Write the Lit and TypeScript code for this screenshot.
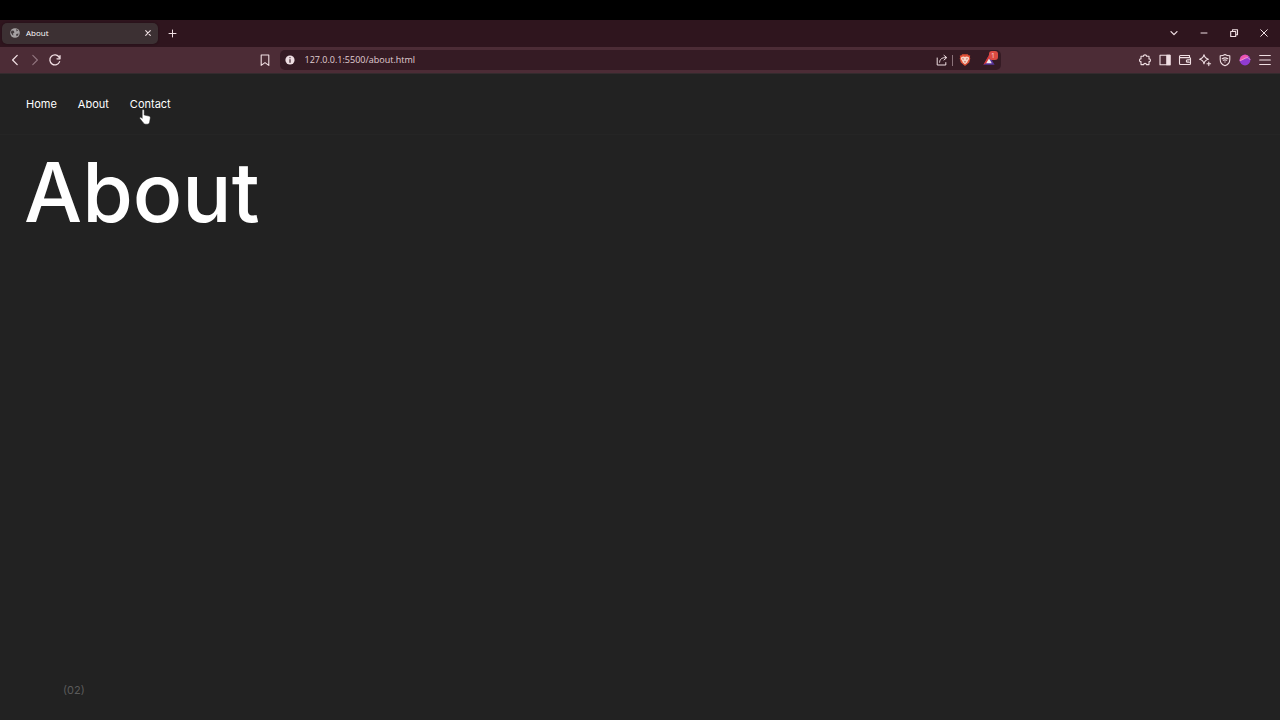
import { LitElement, html, css, svg } from "lit";
import { customElement } from "lit/decorators.js";

const icon = (body: unknown, size = 14) => html`<svg
  width=${size} height=${size} viewBox="0 0 14 14" fill="none" stroke="currentColor"
  stroke-width="1.1" stroke-linecap="round" stroke-linejoin="round" aria-hidden="true">${body}</svg>`;

const icons = {
  globe: svg`<circle cx="7" cy="7" r="4.8" fill="#a5a0a2" stroke="none"/><path d="m3.6 4.6 2.2.2.6 1.6L5 7.6l.4 2-1-.6-1.6-2.4zM8.2 3l2 1.2L8.6 5.6zM8.2 8l2.4-.4-.6 2-1.6.6z" fill="#443b3e" stroke="none"/>`,
  close: svg`<path d="m4.7 4.7 4.6 4.6m0-4.6L4.7 9.3"/>`,
  plus: svg`<path d="M7.5 4v7M4 7.5h7" stroke-width="1"/>`,
  chevron: svg`<path d="m4 5.6 3 3 3-3" stroke-width="1.3"/>`,
  minimise: svg`<path d="M4 7h6" stroke-width="1"/>`,
  restore: svg`<path d="M3.7 5.5h5v5h-5zM5.5 5.3V3.7h5v5H8.9"/>`,
  quit: svg`<path d="m3.7 3.7 6.6 6.6m0-6.6-6.6 6.6" stroke-width="1"/>`,
  back: svg`<path d="M9.2 2.4 4.6 7l4.6 4.6" stroke-width="1.3"/>`,
  forward: svg`<path d="M4.8 2.4 9.4 7l-4.6 4.6"/>`,
  reload: svg`<path d="M11.6 8.6A5 5 0 1 1 11.2 4.4M12 2.6v3.2H9" stroke-width="1.3"/>`,
  bookmark: svg`<path d="M3.2 2h7.6v10.4L7 9.6l-3.8 2.8z"/>`,
  info: svg`<circle cx="7" cy="7" r="4.6" fill="#eddde1" stroke="none"/><path d="M7 4.6v.1M7 6.7v2.6" stroke="#38202a" stroke-width="1.2"/>`,
  share: svg`<path d="M2.2 5v7h8.6V9.6M4.6 9.2c.2-3 2-4.6 6.2-4.6M9 2.4l2.8 2.2L9 7" stroke-width="1"/>`,
  lion: svg`<path d="M4.2 1.2h5.6l1 1.2 1.4.2-.3 1.8.4 1-1.1 4.2L7 13 2.8 9.6 1.7 5.4l.4-1L1.8 2.6l1.4-.2z" fill="#df5036" stroke="none"/><path d="m3.4 4 2.2-.6L7 4l1.4-.6 2.2.6.6 1.8-1.4 2.2L9.2 9.4 7 11.2 4.8 9.4 4.2 8 2.8 5.8z" fill="#f6d4c8" stroke="none"/><path d="m4.6 5.8 1 .2m3.8-.2-1 .2M6.4 8.8h1.2" stroke="#b65346" stroke-width=".8"/>`,
  rewards: svg`<path d="M7 2 1.4 11.8h11.2z" fill="#57349a" stroke="none"/><path d="M7 2 1.4 11.8 7 8.6z" fill="#d9372e" stroke="none"/><path d="m7 5.5-2.8 4.8h5.6z" fill="#f6e8ef" stroke="none"/>`,
  puzzle: svg`<path d="M3 3.2h2.5C5 1.4 9 1.4 8.5 3.2H11v2.7c1.9-.5 1.9 3.2 0 2.7v3H8.4c.3-1.6-3-1.6-2.7 0H3v-3c-2 .5-2-3.2 0-2.7z"/>`,
  sidebar: svg`<path d="M2 2.2h10v9.6H2z"/><path d="M8.8 2.2H12v9.6H8.8z" fill="currentColor"/>`,
  wallet: svg`<path d="M11.5 4.7V2.5h-9a1 1 0 0 0-1 1v7a1 1 0 0 0 1 1h9a1 1 0 0 0 1-1V5.6a1 1 0 0 0-1-1H2M12.4 6.7H9.6a1.3 1.3 0 0 0 0 2.6h2.8M10 8h.1"/>`,
  sparkle: svg`<path d="M6 1.7c.6 3 1.4 3.9 4.4 4.6C7.4 7 6.6 7.8 6 10.8 5.4 7.8 4.5 7 1.6 6.3c2.9-.7 3.8-1.6 4.4-4.6zM10.8 9v3.6M9 10.8h3.6"/>`,
  shield: svg`<path d="M7 1.5c1.5 1 3 1.3 4.8 1.3v3.6c0 3-1.8 5.2-4.8 6.4-3-1.2-4.8-3.4-4.8-6.4V2.8C4 2.8 5.5 2.5 7 1.5z"/><path d="M4.2 5.7c1.8-1 3.8-1 5.6 0M5.3 7.3c1.2-.6 2.2-.6 3.4 0M7 8.9v.2"/>`,
  orb: svg`<circle cx="7" cy="7" r="5.4" fill="#913bd0" stroke="none"/><path d="M1.8 6A5.4 5.4 0 0 1 11 3.4C8.6 4 6.4 7 1.7 7.6z" fill="#ed55ac" stroke="none"/><path d="M2 7.6C5 7 7 4.4 10 4.6l2 2" stroke="#f29bd6" stroke-width=".9"/>`,
  menu: svg`<path d="M1.7 2.5h10.6M1.7 7h10.6M1.7 11.5h10.6" stroke-width="1.2"/>`,
};

const button = (label: string, body: unknown, cls = "") =>
  html`<button class="icon ${cls}" type="button" aria-label=${label}>${icon(body)}</button>`;

@customElement("browser-chrome")
export class BrowserChrome extends LitElement {
  static styles = css`
    :host { display: block; color: #f0dfe3; font: 9px/12px "Open Sans", sans-serif; }
    button { font: inherit; color: inherit; border: 0; padding: 0; background: none; }
    svg { display: block; flex: none; }
    .icon { display: grid; place-items: center; width: 20px; height: 20px; }
    .strip { display: flex; align-items: center; height: 26px; padding: 0 6px 1px 2px; background: #2f151e; }
    .tab { display: flex; align-items: center; gap: 4px; width: 156px; height: 21px; box-sizing: border-box; padding-left: 6px; border-radius: 5px; background: #3c3033; box-shadow: 0 0 2px #1f0e14; }
    .title { flex: 1; text-align: left; font-size: 8px; color: #fff; }
    .add { margin-left: 4px; }
    .window { display: flex; gap: 10px; margin-left: auto; }
    .toolbar { display: grid; grid-template-columns: 10fr 746px 11fr; align-items: center; height: 26px; padding: 0 5px; background: #4c2c36; border-bottom: 1px solid #342b2e; }
    .group { display: flex; align-items: center; }
    .end { justify-content: flex-end; }
    .dim { color: #937680; }
    .place { gap: 5px; }
    .address { display: flex; align-items: center; flex: 1; height: 20px; padding-right: 2px; border-radius: 5px; background: #351b24; }
    input { flex: 1; min-width: 0; padding: 0; margin-left: 5px; border: 0; outline: 0; background: none; color: #e0ced3; font: 9px/14px "Open Sans", sans-serif; }
    .rule { width: 1px; height: 11px; margin-right: 2px; background: #8b727a; }
    .rewards { position: relative; margin-left: 4px; }
    .badge { position: absolute; right: 1px; top: 1px; width: 9px; height: 9px; border-radius: 3px; background: #da4a42; color: #ffd8d5; font-size: 7px; line-height: 9px; }
  `;

  render() {
    return html`
      <div class="strip">
        <div class="tab">${icon(icons.globe)}<span class="title">About</span>${button("Close tab", icons.close)}</div>
        ${button("New tab", icons.plus, "add")}
        <div class="window">
          ${button("Search tabs", icons.chevron)}${button("Minimise", icons.minimise)}
          ${button("Restore", icons.restore)}${button("Close", icons.quit)}
        </div>
      </div>
      <div class="toolbar">
        <div class="group">
          ${button("Back", icons.back)}${button("Forward", icons.forward, "dim")}${button("Reload", icons.reload)}
        </div>
        <div class="group place">
          ${button("Bookmark", icons.bookmark)}
          <div class="address">
            ${button("Site information", icons.info)}
            <input type="text" aria-label="Address" value="127.0.0.1:5500/about.html" />
            ${button("Share", icons.share)}
            <span class="rule"></span>
            ${button("Shields", icons.lion)}
            <button class="icon rewards" type="button" aria-label="Rewards">${icon(icons.rewards)}<span class="badge">1</span></button>
          </div>
        </div>
        <div class="group end">
          ${button("Extensions", icons.puzzle)}${button("Sidebar", icons.sidebar)}${button("Wallet", icons.wallet)}
          ${button("Assistant", icons.sparkle)}${button("VPN", icons.shield)}${button("Profile", icons.orb)}${button("Menu", icons.menu)}
        </div>
      </div>
    `;
  }
}

@customElement("app-root")
export class AppRoot extends LitElement {
  static styles = css`
    :host { display: flex; flex-direction: column; min-height: 100vh; box-sizing: border-box; padding-top: 20px; background: linear-gradient(#000 20px, #222 20px); color: #fff; font-family: Inter, sans-serif; }
    nav { display: flex; gap: 21px; padding: 22px 26px; font-size: 11px; line-height: 16px; border-bottom: 1px solid #252525; }
    a { color: inherit; text-decoration: none; }
    .current { position: relative; }
    .pointer { position: absolute; left: 9px; top: 13px; }
    main { display: flex; flex-direction: column; flex: 1; padding: 10px 24px 22px; }
    h1 { margin: 0; font-size: 82px; line-height: 96px; font-weight: 500; }
    .index { margin: auto 0 0 39px; color: #5b5b5b; font-size: 11px; line-height: 16px; }
  `;

  render() {
    return html`
      <browser-chrome></browser-chrome>
      <nav>
        <a href="#home">Home</a>
        <a href="#about">About</a>
        <a class="current" href="#contact">Contact
          <svg class="pointer" width="12" height="16" viewBox="0 0 12 16" aria-hidden="true">
            <path d="M3.2 1.5C3.2.2 5.2.2 5.2 1.5V6l4.8 1.1c1 .3 1.4.9 1.3 1.9l-.7 4.2c-.3 1.3-1 2-2.3 2H6.6c-1 0-1.6-.4-2.2-1.2L.9 9.6c-.7-1.1.5-1.9 1.3-1.2l1 1z" fill="#fff" stroke="#222" stroke-width=".5"/>
          </svg>
        </a>
      </nav>
      <main>
        <h1>About</h1>
        <p class="index">(02)</p>
      </main>
    `;
  }
}
